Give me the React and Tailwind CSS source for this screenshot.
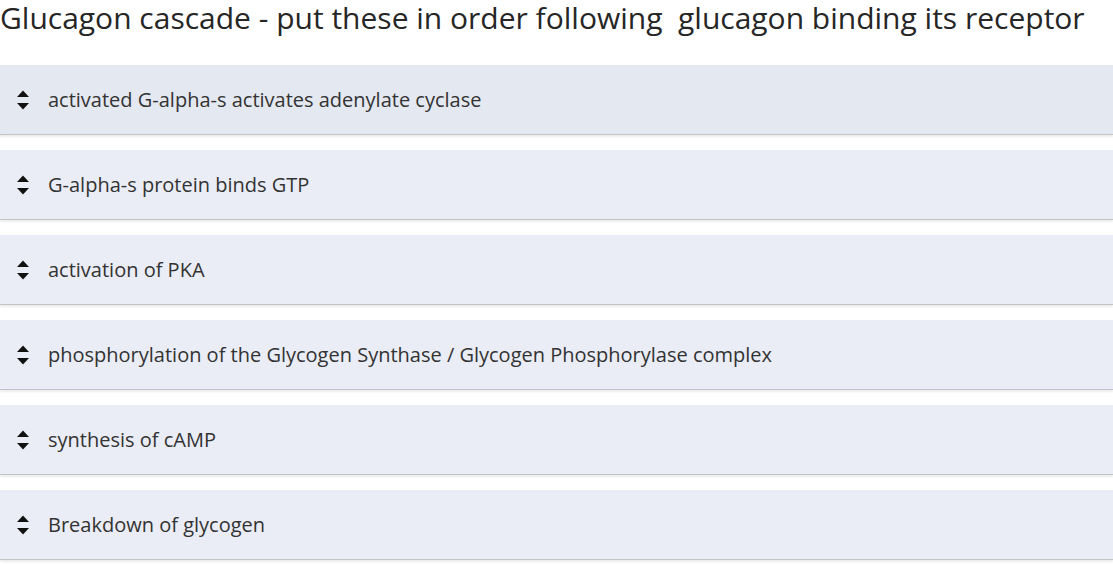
const items = [
  "activated G-alpha-s activates adenylate cyclase",
  "G-alpha-s protein binds GTP",
  "activation of PKA",
  "phosphorylation of the Glycogen Synthase / Glycogen Phosphorylase complex",
  "synthesis of cAMP",
  "Breakdown of glycogen",
];

function SortIcon() {
  return (
    <svg width="14" height="20" viewBox="0 0 14 20" className="shrink-0">
      <path d="M7 0.5 L13 7 L1 7 Z" fill="#111" />
      <path d="M7 19.5 L13 13 L1 13 Z" fill="#111" />
    </svg>
  );
}

export default function App() {
  return (
    <div className="w-[1113px] h-[564px] bg-white overflow-hidden" style={{ fontFamily: '"Open Sans", sans-serif' }}>
      <h1 className="text-[30px] leading-[36px] text-[#262626] whitespace-nowrap">
        Glucagon cascade - put these in order following&nbsp; glucagon binding its receptor
      </h1>
      <ul className="mt-[29px] flex flex-col gap-[15px]">
        {items.map((t, i) => (
          <li
            key={i}
            className={
              "h-[70px] flex items-center gap-[18px] pl-4 text-[20px] text-[#333] border-b border-[#c4c4c4] shadow-[0_2px_2px_rgba(0,0,0,0.08)] " +
              (i === 0 ? "bg-[#e4e8f1]" : "bg-[#eaedf5]")
            }
          >
            <SortIcon />
            <span>{t}</span>
          </li>
        ))}
      </ul>
    </div>
  );
}
